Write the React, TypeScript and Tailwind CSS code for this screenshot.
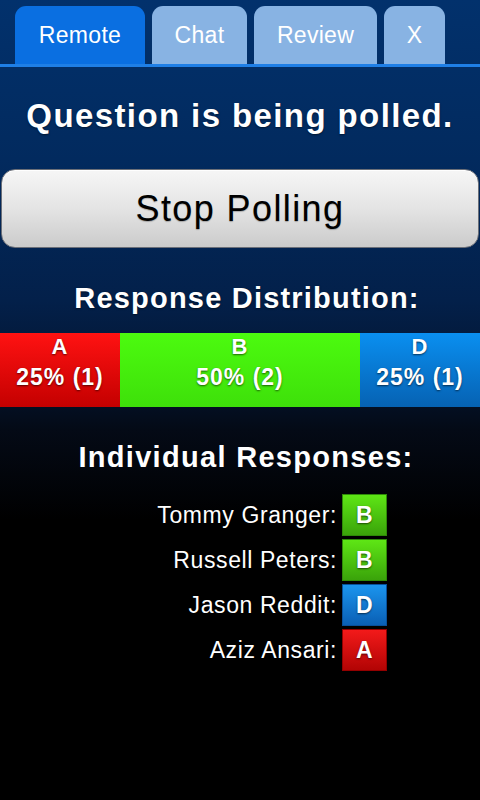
import React from "react";

const tabs = [
  { label: "Remote", w: "w-[130px]", active: true },
  { label: "Chat", w: "w-[95px]", active: false },
  { label: "Review", w: "w-[123px]", active: false },
  { label: "X", w: "w-[61px]", active: false },
];

const responses = [
  { name: "Tommy Granger:", ans: "B" },
  { name: "Russell Peters:", ans: "B" },
  { name: "Jason Reddit:", ans: "D" },
  { name: "Aziz Ansari:", ans: "A" },
];

function Badge({ ans }: { ans: string }) {
  const cls =
    ans === "B"
      ? "bg-[linear-gradient(to_bottom,#5ee615,#3aa30a)] border-[#2f8a08]"
      : ans === "D"
      ? "bg-[linear-gradient(to_bottom,#1b95ee,#0a5fb4)] border-[#08509a]"
      : "bg-[linear-gradient(to_bottom,#f31a1a,#b20404)] border-[#930000]";
  return (
    <div
      className={`w-[45px] h-[42px] border flex items-center justify-center text-white font-bold text-[23px] tracking-[0.5px] [text-shadow:0_1px_2px_rgba(0,0,0,0.6)] ${cls}`}
    >
      {ans}
    </div>
  );
}

export default function App() {
  return (
    <div
      className="w-[480px] h-[800px] overflow-hidden text-white bg-[linear-gradient(to_bottom,#02316c_0px,#022a5e_160px,#03204a_300px,#041530_380px,#040a16_430px,#000000_520px)]"
      style={{ fontFamily: '"Liberation Sans", Arial, sans-serif' }}
    >
      {/* Tab bar */}
      <div className="flex gap-[7px] pl-[15px] pt-[6px]">
        {tabs.map((t) => (
          <div
            key={t.label}
            className={`${t.w} h-[58px] rounded-t-[11px] flex items-center justify-center text-[23px] tracking-[0.3px] pt-[1px] ${
              t.active ? "bg-[#0a6fe1] text-white" : "bg-[#88b3e3] text-white"
            }`}
          >
            {t.label}
          </div>
        ))}
      </div>
      <div className="h-[3px] bg-[#1f7fe6]" />

      {/* Title */}
      <div className="mt-[30px] text-center font-bold text-[33px] leading-[38px] tracking-[1.4px] [text-shadow:0_1px_2px_rgba(0,0,0,0.5)]">
        Question is being polled.
      </div>

      {/* Stop button */}
      <div className="mt-[34px] px-[1px]">
        <div className="h-[79px] rounded-[14px] border border-[#6b6f78] bg-[linear-gradient(to_bottom,#f6f6f6_0%,#e4e4e4_50%,#cbcbcb_100%)] flex items-center justify-center text-black text-[36px] tracking-[1.4px] shadow-[inset_0_1px_0_rgba(255,255,255,0.9)]">
          <span className="[text-shadow:0_1px_1px_rgba(0,0,0,0.25)]">Stop Polling</span>
        </div>
      </div>

      {/* Response Distribution */}
      <div className="mt-[34px] pl-[14px] text-center font-bold text-[29px] leading-[32px] tracking-[1.2px] [text-shadow:0_1px_2px_rgba(0,0,0,0.5)]">
        Response Distribution:
      </div>

      <div className="mt-[19px] flex h-[74px] font-bold tracking-[1px] [text-shadow:0_1px_2px_rgba(0,0,0,0.6)]">
        <div className="w-[120px] bg-[linear-gradient(to_bottom,#ff1212,#c40000)] flex flex-col items-center pt-[2px]">
          <div className="text-[22px] leading-[24px]">A</div>
          <div className="mt-[3px] text-[23px] leading-[30px]">25% (1)</div>
        </div>
        <div className="w-[240px] bg-[linear-gradient(to_bottom,#4cfb0f,#3ee00a)] flex flex-col items-center pt-[2px]">
          <div className="text-[22px] leading-[24px]">B</div>
          <div className="mt-[3px] text-[23px] leading-[30px]">50% (2)</div>
        </div>
        <div className="w-[120px] bg-[linear-gradient(to_bottom,#0a8ff0,#0662b3)] flex flex-col items-center pt-[2px]">
          <div className="text-[22px] leading-[24px]">D</div>
          <div className="mt-[3px] text-[23px] leading-[30px]">25% (1)</div>
        </div>
      </div>

      {/* Individual Responses */}
      <div className="mt-[34px] pl-[12px] text-center font-bold text-[29px] leading-[32px] tracking-[1.3px]">
        Individual Responses:
      </div>

      <div className="mt-[21px] flex flex-col gap-[3px]">
        {responses.map((r) => (
          <div key={r.name} className="flex items-center">
            <div className="w-[342px] text-right pr-[5px] text-[23px] tracking-[0.6px]">{r.name}</div>
            <Badge ans={r.ans} />
          </div>
        ))}
      </div>
    </div>
  );
}
